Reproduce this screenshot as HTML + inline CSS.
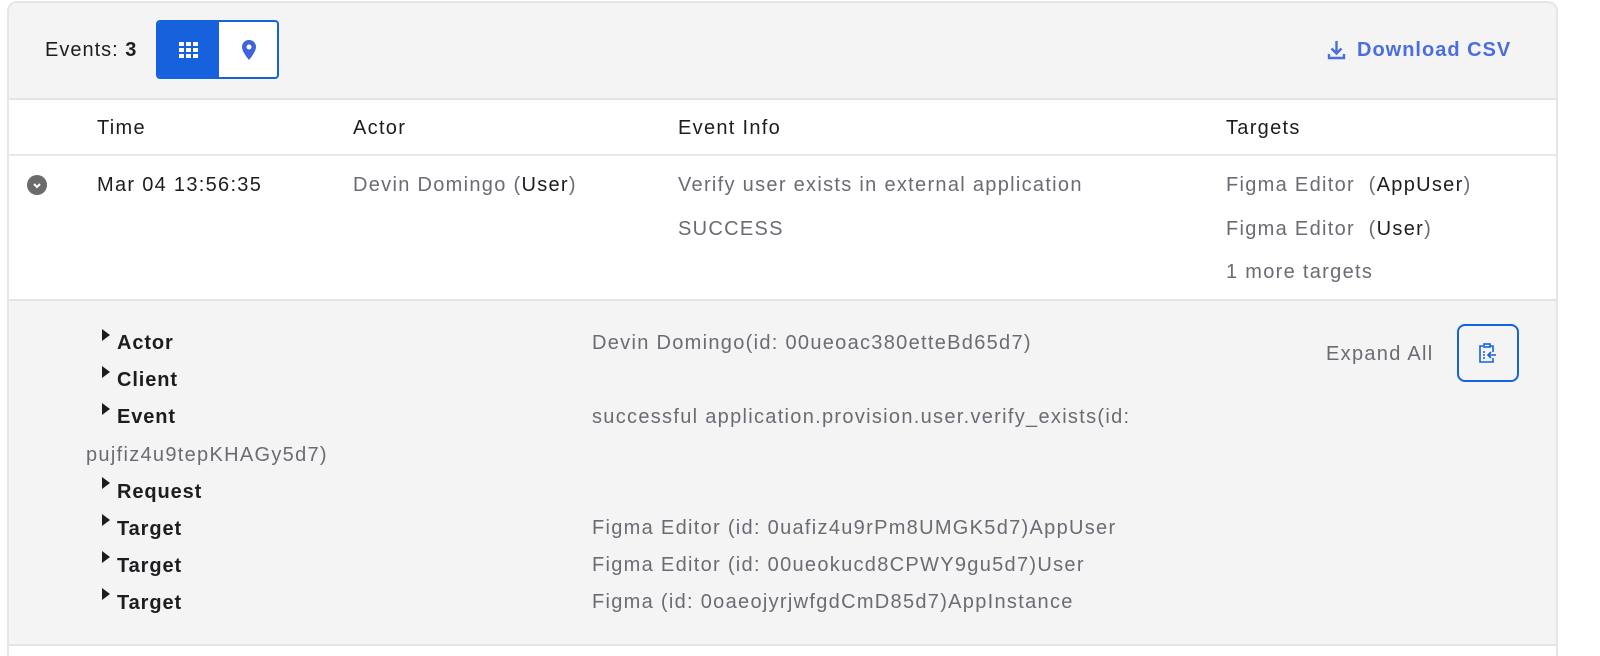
<!DOCTYPE html>
<html><head><style>
*{margin:0;padding:0;box-sizing:border-box}
html,body{width:1600px;height:656px;overflow:hidden}
body{background:#fff;font-family:"Liberation Sans",sans-serif;font-size:20px;letter-spacing:1.3px;color:#6b6b74}
#w{position:relative;width:1600px;height:656px;overflow:hidden}
.a{position:absolute;white-space:nowrap;line-height:24px}
.k{color:#1d1d21}
.b{font-weight:bold;color:#1d1d21;letter-spacing:0.9px}
.tri{position:absolute;width:0;height:0;border-top:6px solid transparent;border-bottom:6px solid transparent;border-left:8px solid #1d1d21}
</style></head><body><div id="w">
<div style="position:absolute;left:7px;top:1px;width:1551px;height:655px;border:2px solid #e6e6e6;border-bottom:none;border-radius:10px 10px 0 0;background:#f4f4f4"></div>
<div style="position:absolute;left:9px;top:98px;width:1547px;height:203px;background:#fff;border-top:2px solid #e4e4e4;border-bottom:2px solid #e4e4e4"></div>
<div style="position:absolute;left:9px;top:154px;width:1547px;height:2px;background:#e8e8e8"></div>
<div style="position:absolute;left:9px;top:644px;width:1547px;height:12px;background:#fff;border-top:2px solid #e4e4e4"></div>

<div class="a k" style="left:45px;top:38px;letter-spacing:1px">Events: <b>3</b></div>
<div style="position:absolute;left:156px;top:20px;width:123px;height:59px;border:2px solid #1662dd;border-radius:4px;background:#fff;overflow:hidden">
 <div style="position:absolute;left:0;top:0;width:61px;height:59px;background:#1662dd"></div>
 <svg style="position:absolute;left:21px;top:20px" width="20" height="16" viewBox="0 0 20 16" fill="#fff">
  <rect x="0" y="0" width="5" height="4"/><rect x="7" y="0" width="5" height="4"/><rect x="14" y="0" width="5" height="4"/>
  <rect x="0" y="6" width="5" height="4"/><rect x="7" y="6" width="5" height="4"/><rect x="14" y="6" width="5" height="4"/>
  <rect x="0" y="12" width="5" height="4"/><rect x="7" y="12" width="5" height="4"/><rect x="14" y="12" width="5" height="4"/></svg>
 <svg style="position:absolute;left:84px;top:18px" width="14" height="20" viewBox="0 0 14 20"><path d="M7 0C3 0 0 3 0 7c0 5 7 13 7 13s7-8 7-13c0-4-3-7-7-7z" fill="#3d63dd"/><circle cx="7" cy="7" r="2.5" fill="#fff"/></svg>
</div>
<svg style="position:absolute;left:1327px;top:40px" width="19" height="20" viewBox="0 0 19 20" fill="none" stroke="#4a6ee0" stroke-width="2.4"><path d="M9.5 1v12M4.5 8.5l5 5 5-5M2 14v4h15v-4"/></svg>
<div class="a" style="left:1357px;top:38px;color:#4a6ee0;font-weight:bold;font-size:20px;letter-spacing:1px">Download CSV</div>

<div class="a k" style="left:97px;top:116px">Time</div>
<div class="a k" style="left:353px;top:116px">Actor</div>
<div class="a k" style="left:678px;top:116px">Event Info</div>
<div class="a k" style="left:1226px;top:116px">Targets</div>

<div style="position:absolute;left:27px;top:175px;width:20px;height:20px;border-radius:50%;background:#6b6b6b"></div>
<svg style="position:absolute;left:31px;top:179px" width="12" height="12" viewBox="0 0 12 12"><path d="M3 5l3 3 3-3" stroke="#fff" stroke-width="2" fill="none"/></svg>
<div class="a k" style="left:97px;top:173px">Mar 04 13:56:35</div>
<div class="a" style="left:353px;top:173px">Devin Domingo (<span class="k">User</span>)</div>
<div class="a" style="left:678px;top:173px">Verify user exists in external application</div>
<div class="a" style="left:678px;top:217px">SUCCESS</div>
<div class="a" style="left:1226px;top:173px">Figma Editor &nbsp;(<span class="k">AppUser</span>)</div>
<div class="a" style="left:1226px;top:217px">Figma Editor &nbsp;(<span class="k">User</span>)</div>
<div class="a" style="left:1226px;top:260px">1 more targets</div>

<div class="tri" style="left:102px;top:329px"></div><div class="a b" style="left:117px;top:331px">Actor</div>
<div class="tri" style="left:102px;top:366px"></div><div class="a b" style="left:117px;top:368px">Client</div>
<div class="tri" style="left:102px;top:403px"></div><div class="a b" style="left:117px;top:405px">Event</div>
<div class="a" style="left:86px;top:443px">pujfiz4u9tepKHAGy5d7)</div>
<div class="tri" style="left:102px;top:477px"></div><div class="a b" style="left:117px;top:480px">Request</div>
<div class="tri" style="left:102px;top:514px"></div><div class="a b" style="left:117px;top:517px">Target</div>
<div class="tri" style="left:102px;top:551px"></div><div class="a b" style="left:117px;top:554px">Target</div>
<div class="tri" style="left:102px;top:588px"></div><div class="a b" style="left:117px;top:591px">Target</div>

<div class="a" style="left:592px;top:331px">Devin Domingo(id: 00ueoac380etteBd65d7)</div>
<div class="a" style="left:592px;top:405px">successful application.provision.user.verify_exists(id:</div>
<div class="a" style="left:592px;top:516px">Figma Editor (id: 0uafiz4u9rPm8UMGK5d7)AppUser</div>
<div class="a" style="left:592px;top:553px">Figma Editor (id: 00ueokucd8CPWY9gu5d7)User</div>
<div class="a" style="left:592px;top:590px">Figma (id: 0oaeojyrjwfgdCmD85d7)AppInstance</div>

<div class="a" style="left:1326px;top:342px;font-size:20px">Expand All</div>
<div style="position:absolute;left:1457px;top:324px;width:62px;height:58px;border:2px solid #1662dd;border-radius:8px"></div>
<svg style="position:absolute;left:1479px;top:343px" width="18" height="20" viewBox="0 0 18 20" fill="none" stroke="#1662dd" stroke-width="1.6"><path d="M4 3H1v16h13v-4M14 9V3h-3"/><rect x="5" y="1" width="6" height="3"/><path d="M4 9h2M4 12h2M4 15h2M17 12h-8M12 9l-3 3 3 3"/></svg>
</div></body></html>
